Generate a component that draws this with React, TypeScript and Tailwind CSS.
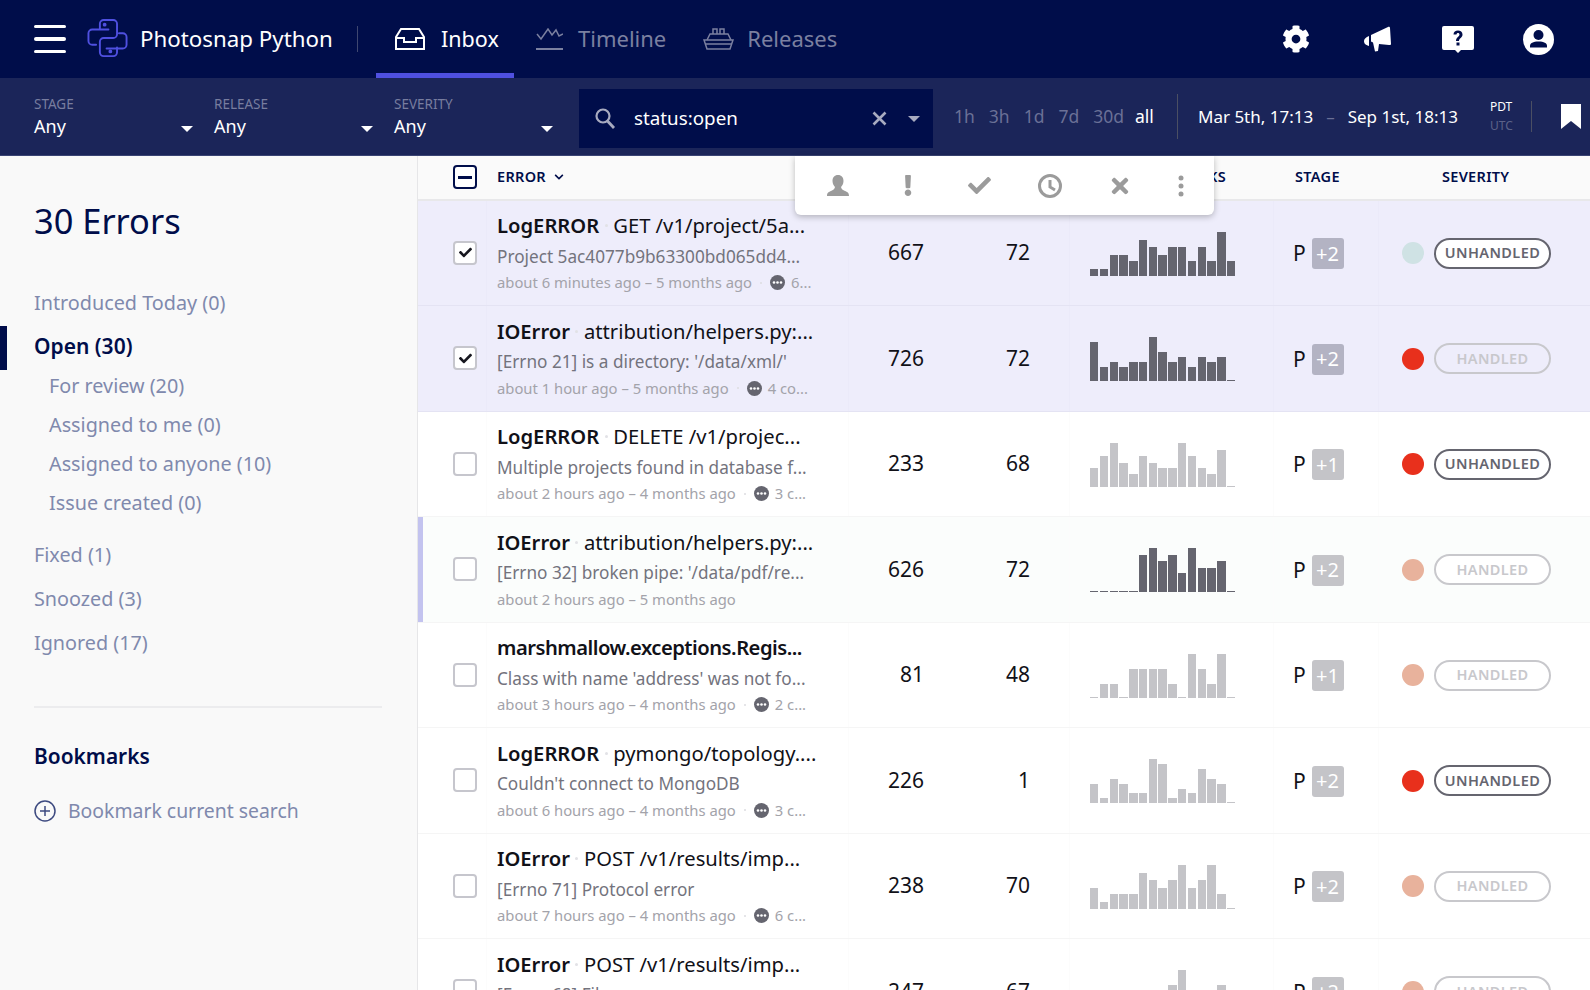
/**
 * Error inbox screen — top nav, filter bar, sidebar with saved searches, issue table.
 */
import { FaCog, FaCheck, FaTimes, FaExclamation, FaChevronDown } from 'react-icons/fa'

type Issue = {
  name: string
  path?: string
  message: string
  time: string
  comments?: string
  events: number
  users: number
  extra: string
  dot: 'pale' | 'red' | 'peach'
  unhandled: boolean
  selected?: boolean
  hover?: boolean
  bars: number[]
}

const ISSUES: Issue[] = [
  {
    name: 'LogERROR', path: 'GET /v1/project/5a...', message: 'Project 5ac4077b9b63300bd065dd4...',
    time: 'about 6 minutes ago – 5 months ago', comments: '6...', events: 667, users: 72, extra: '+2',
    dot: 'pale', unhandled: true, selected: true,
    bars: [7, 7, 21, 21, 15, 36, 29, 21, 29, 29, 15, 29, 15, 44, 15],
  },
  {
    name: 'IOError', path: 'attribution/helpers.py:...', message: "[Errno 21] is a directory: '/data/xml/'",
    time: 'about 1 hour ago – 5 months ago', comments: '4 co...', events: 726, users: 72, extra: '+2',
    dot: 'red', unhandled: false, selected: true,
    bars: [39, 14, 19, 14, 19, 19, 44, 29, 19, 24, 14, 24, 19, 24, 1],
  },
  {
    name: 'LogERROR', path: 'DELETE /v1/projec...', message: 'Multiple projects found in database f...',
    time: 'about 2 hours ago – 4 months ago', comments: '3 c...', events: 233, users: 68, extra: '+1',
    dot: 'red', unhandled: true,
    bars: [19, 31, 44, 24, 13, 31, 24, 19, 19, 44, 31, 19, 13, 37, 1],
  },
  {
    name: 'IOError', path: 'attribution/helpers.py:...', message: "[Errno 32] broken pipe: '/data/pdf/re...",
    time: 'about 2 hours ago – 5 months ago', events: 626, users: 72, extra: '+2',
    dot: 'peach', unhandled: false, hover: true,
    bars: [1, 1, 1, 1, 1, 37, 44, 31, 37, 19, 44, 24, 24, 31, 1],
  },
  {
    name: 'marshmallow.exceptions.Regis...', message: "Class with name 'address' was not fo...",
    time: 'about 3 hours ago – 4 months ago', comments: '2 c...', events: 81, users: 48, extra: '+1',
    dot: 'peach', unhandled: false,
    bars: [1, 14, 14, 1, 29, 29, 29, 29, 14, 1, 44, 29, 14, 44, 1],
  },
  {
    name: 'LogERROR', path: 'pymongo/topology....', message: "Couldn't connect to MongoDB",
    time: 'about 6 hours ago – 4 months ago', comments: '3 c...', events: 226, users: 1, extra: '+2',
    dot: 'red', unhandled: true,
    bars: [19, 5, 24, 19, 10, 10, 44, 39, 5, 14, 10, 34, 24, 19, 1],
  },
  {
    name: 'IOError', path: 'POST /v1/results/imp...', message: '[Errno 71] Protocol error',
    time: 'about 7 hours ago – 4 months ago', comments: '6 c...', events: 238, users: 70, extra: '+2',
    dot: 'peach', unhandled: false,
    bars: [21, 7, 15, 15, 15, 36, 29, 21, 29, 44, 21, 29, 44, 15, 1],
  },
  {
    name: 'IOError', path: 'POST /v1/results/imp...', message: '[Errno 68] File error',
    time: 'about 8 hours ago – 4 months ago', comments: '2 c...', events: 247, users: 67, extra: '+2',
    dot: 'peach', unhandled: false,
    bars: [10, 5, 12, 10, 14, 10, 18, 16, 29, 44, 16, 12, 18, 29, 1],
  },
]

function PythonLogo() {
  return (
    <svg width="41" height="40" viewBox="-1 -1 42 42" fill="none" stroke="#4f50e0" strokeWidth="2" strokeLinecap="round">
      <path d="M12 9V4a4 4 0 0 1 4-4h10a4 4 0 0 1 4 4v11a4 4 0 0 1-4 4H16a4 4 0 0 0-4 4v11a4 4 0 0 0 4 4h10a4 4 0 0 0 4-4v-5" />
      <path d="M21 10H4a4 4 0 0 0-4 4v8a4 4 0 0 0 4 4h4" />
      <path d="M19 30h17a4 4 0 0 0 4-4v-8a4 4 0 0 0-4-4h-4" />
      <circle cx="17" cy="5" r="1" fill="#4f50e0" />
      <circle cx="23" cy="33" r="1" fill="#4f50e0" />
    </svg>
  )
}

function InboxIcon() {
  return (
    <svg width="30" height="22" viewBox="0 0 30 22" fill="none" stroke="#fff" strokeWidth="2">
      <path d="M1 21V9l5-8h18l5 8v12z" />
      <path d="M1 10h8v4h12v-4h8" />
    </svg>
  )
}

function TimelineIcon() {
  return (
    <svg width="27" height="22" viewBox="0 0 27 22" fill="none" stroke="#7b80a0" strokeWidth="2">
      <path d="M1 6l4 5 7-10 4 6 4-5 3 6 4-2" strokeWidth="1.5" />
      <path d="M0 21h27" />
    </svg>
  )
}

function ReleasesIcon() {
  return (
    <svg width="31" height="22" viewBox="0 0 31 22" fill="none" stroke="#7b80a0" strokeWidth="1.5">
      <path d="M1 12h29l-3 9H4z" />
      <path d="M2 16h27" />
      <path d="M4 12l3-6h18l3 6" />
      <path d="M10 6V1h4v5M17 6V1h4v5" />
    </svg>
  )
}

function MegaphoneIcon() {
  return (
    <svg width="28" height="26" viewBox="0 0 28 26" fill="#fff">
      <path d="M7 9L24 1c1-.5 2 0 2 1l1 16c0 1-1 1-2 1l-10-1-1 7-3 .5-2-9-2-1z" />
      <path d="M5 10v10C1 19 0 17 0 15s2-4 5-5z" />
    </svg>
  )
}

function HelpIcon() {
  return (
    <svg width="32" height="27" viewBox="0 0 32 27" fill="#fff">
      <path d="M2 0h28a2 2 0 0 1 2 2v20a2 2 0 0 1-2 2H19l-3 3-3-3H2a2 2 0 0 1-2-2V2a2 2 0 0 1 2-2z" />
      <path d="M11.5 8.5c0-2.500 2-4 4.500-4s4.500 1.500 4.500 4c0 3.500-3.500 3.500-3.500 6.500h-3c0-4 3.500-4 3.500-6.500 0-.9-.6-1.500-1.500-1.500s-1.500.6-1.500 1.500z" fill="#000d4a" />
      <rect x="14.500" y="16.500" width="3" height="3" fill="#000d4a" />
    </svg>
  )
}

function AccountIcon() {
  return (
    <svg width="31" height="31" viewBox="0 0 31 31">
      <circle cx="15.500" cy="15.500" r="15.500" fill="#fff" />
      <circle cx="15.500" cy="11" r="5" fill="#000d4a" />
      <path d="M7 22c0-3 3-4.500 8.500-4.500S24 19 24 22v1.500H7z" fill="#000d4a" />
    </svg>
  )
}

function Caret({ color = 'border-t-white' }: { color?: string }) {
  return <span className={`block w-0 h-0 border-x-[6px] border-x-transparent border-t-[6px] ${color}`} />
}

function CommentDot() {
  return (
    <svg width="15" height="15" viewBox="0 0 15 15" className="shrink-0">
      <circle cx="7.500" cy="7.500" r="7.500" fill="#65656f" />
      <circle cx="4" cy="7.500" r="1.300" fill="#fff" />
      <circle cx="7.500" cy="7.500" r="1.300" fill="#fff" />
      <circle cx="11" cy="7.500" r="1.300" fill="#fff" />
    </svg>
  )
}

function FilterSelect({ label }: { label: string }) {
  return (
    <div className="w-[180px] pr-[21px] flex items-end justify-between">
      <div>
        <div className="text-[13.500px] leading-[16px] text-[#787d9f] mt-[2px]">{label}</div>
        <div className="text-[18px] leading-[28px] text-white">Any</div>
      </div>
      <span className="mb-[8px]"><Caret /></span>
    </div>
  )
}

function SidebarLink({ children, sub, className = '' }: { children: string; sub?: boolean; className?: string }) {
  return (
    <div className={`text-[19.800px] leading-[30px] text-[#8089ad] ${sub ? 'pl-[15px]' : ''} ${className}`}>{children}</div>
  )
}

function Sparkline({ bars, dark }: { bars: number[]; dark: boolean }) {
  return (
    <div className="flex items-end gap-[1.400px] h-[44px]">
      {bars.map((h, i) => (
        <div
          key={i}
          className={`w-[8.400px] ${dark ? 'bg-[#65656f]' : 'bg-[#c4c4c8]'}`}
          style={{ height: h }}
        />
      ))}
    </div>
  )
}

function IssueRow({ issue }: { issue: Issue }) {
  const { selected, hover } = issue
  const rowBg = selected ? 'bg-[#eeedfb] border-[#e4e3f3]' : hover ? 'bg-[#fbfdfc] border-[#f5f5f5]' : 'bg-white border-[#f5f5f5]'
  const cellLine = selected ? 'border-[#ebeaf9]' : 'border-[#fcfcfc]'
  const dotColor = issue.dot === 'red' ? 'bg-[#e8301c]' : issue.dot === 'peach' ? 'bg-[#e8b29c]' : 'bg-[#cfe2e4]'

  return (
    <div className={`relative h-[105.500px] shrink-0 border-b grid grid-cols-[68px_362px_92px_129px_204px_105px_1fr] ${rowBg}`}>
      {hover && <div className="absolute left-0 top-0 bottom-0 w-[5px] bg-[#c3c3ef]" />}

      <div className="flex items-center pl-[35px]">
        <div className="w-[24px] h-[24px] rounded-[4px] border-2 border-[#c6c6cd] bg-white flex items-center justify-center">
          {selected && <FaCheck className="w-[13px] h-[13px] text-[#17171f]" />}
        </div>
      </div>

      <div className={`border-l ${cellLine} pl-[10px] pt-[10px]`}>
        <div className="flex items-center h-[30px] text-[20.200px] text-[#111118] whitespace-nowrap">
          <span className={`font-semibold ${issue.path ? '' : 'tracking-[-0.5px]'}`}>{issue.name}</span>
          {issue.path && (
            <>
              <span className="w-[3px] h-[3px] rounded-full bg-[#e2e2e6] mx-[5.500px]" />
              <span>{issue.path}</span>
            </>
          )}
        </div>
        <div className="h-[28px] leading-[31px] text-[17.200px] text-[#73737d] whitespace-nowrap">{issue.message}</div>
        <div className="flex items-center h-[27px] pt-[1px] text-[14.800px] text-[#a3a3aa] whitespace-nowrap">
          <span>{issue.time}</span>
          {issue.comments && (
            <>
              <span className="w-[2px] h-[2px] rounded-full bg-[#dcdce0] mx-[8px]" />
              <CommentDot />
              <span className="ml-[6px]">{issue.comments}</span>
            </>
          )}
        </div>
      </div>

      <div className={`border-l ${cellLine} flex items-center justify-end pr-[16px] text-[21px] text-[#111118]`}>{issue.events}</div>
      <div className="flex items-center justify-end pr-[39px] text-[21px] text-[#111118]">{issue.users}</div>

      <div className={`border-l ${cellLine} flex items-center pl-[20px] pt-[2px]`}>
        <Sparkline bars={issue.bars} dark={Boolean(selected || hover)} />
      </div>

      <div className={`border-l ${cellLine} flex items-center pl-[19px] pt-[2px]`}>
        <span className="w-[18.500px] text-[21px] text-[#111118]">P</span>
        <span className={`w-[32px] h-[31px] rounded-[3px] flex items-center justify-center text-[20px] text-white ${selected ? 'bg-[#b3b3c3]' : 'bg-[#c4c4c8]'}`}>
          {issue.extra}
        </span>
      </div>

      <div className={`border-l ${cellLine} flex items-center pl-[23px] pt-[1px]`}>
        <span className={`w-[22px] h-[22px] rounded-full ${dotColor}`} />
        <span
          className={`ml-[10px] w-[117px] h-[31px] rounded-full border-2 flex items-center justify-center text-[14.500px] font-semibold tracking-[0.4px] ${
            issue.unhandled ? 'border-[#65656f] text-[#65656f] bg-white' : 'border-[#c8c8cc] text-[#c8c8cc]'
          } ${!issue.unhandled && !selected ? 'bg-white' : ''}`}
        >
          {issue.unhandled ? 'UNHANDLED' : 'HANDLED'}
        </span>
      </div>
    </div>
  )
}

export default function App() {
  return (
    <div className="h-screen w-full overflow-hidden flex flex-col bg-white font-['Noto_Sans',sans-serif]">
      {/* Top nav */}
      <header className="h-[78px] shrink-0 bg-[#000d4a] flex items-center">
        <div className="ml-[34px] w-[32px] flex flex-col gap-[9px]">
          <span className="block h-[3.500px] rounded-full bg-white" />
          <span className="block h-[3.500px] rounded-full bg-white" />
          <span className="block h-[3.500px] rounded-full bg-white" />
        </div>
        <div className="ml-[21px]"><PythonLogo /></div>
        <div className="ml-[12px] w-[217px] text-[22.300px] text-white">Photosnap Python</div>
        <div className="w-px h-[26px] bg-[#3f4770]" />
        <div className="ml-[18px] w-[138px] h-full flex items-center pl-[19px] gap-[16px] border-b-[5px] border-[#4f50e0] text-[21.500px] text-white">
          <span className="mt-[5px]"><InboxIcon /></span>
          <span className="mt-[5px]">Inbox</span>
        </div>
        <div className="ml-[22px] flex items-center gap-[15px] text-[22px] text-[#7b80a0]">
          <TimelineIcon />
          <span className="-mt-[2px]">Timeline</span>
        </div>
        <div className="ml-[37px] flex items-center gap-[13px] text-[22px] text-[#7b80a0]">
          <ReleasesIcon />
          <span className="-mt-[2px]">Releases</span>
        </div>
        <div className="ml-auto mr-[36px] flex items-center">
          <FaCog className="w-[28px] h-[28px] text-white" />
          <span className="ml-[54px]"><MegaphoneIcon /></span>
          <span className="ml-[50px]"><HelpIcon /></span>
          <span className="ml-[49px]"><AccountIcon /></span>
        </div>
      </header>

      {/* Filter bar */}
      <div className="h-[78px] shrink-0 bg-[#1b2559] border-b border-[#3a4474] flex items-center pl-[34px]">
        <div className="flex mt-[1px]">
          <FilterSelect label="STAGE" />
          <FilterSelect label="RELEASE" />
          <FilterSelect label="SEVERITY" />
        </div>
        <div className="ml-[5px] w-[354px] h-[59px] mt-[4px] bg-[#000d4a] flex items-center pl-[16px] pr-[13px]">
          <svg width="21" height="21" viewBox="0 0 21 21" fill="none" stroke="#a8abc0" strokeWidth="2.200">
            <circle cx="8" cy="8" r="6.500" />
            <path d="M12.500 13l6.500 7" strokeWidth="2.800" />
          </svg>
          <span className="ml-[18px] text-[18.800px] text-white">status:open</span>
          <svg className="ml-auto" width="15" height="15" viewBox="0 0 15 15" stroke="#a8abc0" strokeWidth="2.600">
            <path d="M1.500 1.500l12 12M13.500 1.500l-12 12" />
          </svg>
          <span className="ml-[21px]"><Caret color="border-t-[#a8abc0]" /></span>
        </div>
        <div className="ml-[21px] w-[223px] flex gap-[14px] text-[17.500px] text-[#6a7096] whitespace-nowrap">
          <span>1h</span>
          <span>3h</span>
          <span>1d</span>
          <span>7d</span>
          <span>30d</span>
          <span className="-ml-[3px] text-white">all</span>
        </div>
        <div className="w-px h-[45px] bg-[#4b4f63]" />
        <div className="ml-[20px] flex items-center text-[17px] text-white whitespace-nowrap">
          <span>Mar 5th, 17:13</span>
          <span className="mx-[13px] text-[#6a7096]">–</span>
          <span>Sep 1st, 18:13</span>
        </div>
        <div className="ml-[32px] flex flex-col gap-[5px] text-[12px] leading-[14px]">
          <span className="text-white">PDT</span>
          <span className="text-[#5b6288]">UTC</span>
        </div>
        <div className="ml-[18px] w-px h-[31px] bg-[#4b4f63]" />
        <svg className="ml-[29px]" width="20" height="25" viewBox="0 0 20 25" fill="#fff">
          <path d="M0 0h20v25l-10-8-10 8z" />
        </svg>
      </div>

      <div className="flex-1 min-h-0 flex">
        {/* Sidebar */}
        <aside className="w-[418px] shrink-0 bg-[#f9f9f9] border-r border-[#e6e6e8] pl-[34px] pr-[35px] pt-[40px]">
          <div className="text-[34.400px] leading-[50px] text-[#000d4a]">30 Errors</div>
          <SidebarLink className="mt-[42px]">Introduced Today (0)</SidebarLink>
          <div className="relative mt-[13px] text-[21px] leading-[30px] font-semibold text-[#000d4a]">
            <span className="absolute -left-[34px] -top-[5px] w-[7px] h-[44px] bg-[#000d4a]" />
            Open (30)
          </div>
          <SidebarLink sub className="mt-[10px]">For review (20)</SidebarLink>
          <SidebarLink sub className="mt-[9px]">Assigned to me (0)</SidebarLink>
          <SidebarLink sub className="mt-[9px]">Assigned to anyone (10)</SidebarLink>
          <SidebarLink sub className="mt-[9px]">Issue created (0)</SidebarLink>
          <SidebarLink className="mt-[22px]">Fixed (1)</SidebarLink>
          <SidebarLink className="mt-[14px]">Snoozed (3)</SidebarLink>
          <SidebarLink className="mt-[14px]">Ignored (17)</SidebarLink>
          <div className="mt-[48px] h-[2px] bg-[#ececee]" />
          <div className="mt-[33px] text-[20.900px] leading-[30px] font-semibold text-[#000d4a]">Bookmarks</div>
          <div className="mt-[25px] flex items-center gap-[12px] text-[19.400px] leading-[30px] text-[#8089ad]">
            <svg width="22" height="22" viewBox="0 0 22 22" fill="none" stroke="#3d4a80" strokeWidth="1.500">
              <circle cx="11" cy="11" r="10" />
              <path d="M11 6v10M6 11h10" />
            </svg>
            Bookmark current search
          </div>
        </aside>

        {/* Issue table */}
        <main className="relative flex-1 min-w-0 flex flex-col">
          <div className="h-[44.500px] shrink-0 bg-[#fafafa] border-b-2 border-[#e8e8ea] grid grid-cols-[68px_362px_92px_129px_204px_105px_1fr] items-center text-[14.500px] font-semibold text-[#000d4a] tracking-[0.3px]">
            <div className="flex pl-[35px]">
              <div className="w-[24px] h-[24px] rounded-[4px] border-2 border-[#000d4a] bg-white flex items-center justify-center">
                <span className="w-[14px] h-[3px] bg-[#000d4a]" />
              </div>
            </div>
            <div className="pl-[11px] flex items-center gap-[8px]">
              ERROR
              <FaChevronDown className="w-[10px] h-[10px]" />
            </div>
            <div />
            <div />
            <div className="pr-[47px] text-right">TRACKS</div>
            <div className="pl-[22px]">STAGE</div>
            <div className="pl-[64px]">SEVERITY</div>
          </div>

          {ISSUES.map((issue, i) => (
            <IssueRow key={i} issue={issue} />
          ))}

          {/* Bulk actions popover */}
          <div className="absolute left-[377px] top-0 w-[419px] h-[59px] bg-white rounded-b-[6px] shadow-[0_2px_6px_rgba(0,0,0,0.25)] flex items-center pl-[8px] text-[#9b9b9b]">
            <span className="w-[70px] flex justify-center">
              <svg width="22" height="21" viewBox="0 0 22 21" fill="#9b9b9b">
                <path d="M11 0c3.500 0 5.500 2.500 5.500 6 0 3-1.500 5-2.500 6 .2 2 2 3 4 4 2 .8 4 1.500 4 5H0c0-3.500 2-4.200 4-5 2-1 3.800-2 4-4-1-1-2.500-3-2.500-6 0-3.500 2-6 5.500-6z" />
              </svg>
            </span>
            <span className="w-[70px] flex justify-center"><FaExclamation className="w-[20px] h-[21px]" /></span>
            <span className="w-[72px] flex justify-center"><FaCheck className="w-[23px] h-[23px]" /></span>
            <span className="w-[70px] flex justify-center">
              <svg width="24" height="24" viewBox="0 0 24 24" fill="none" stroke="#9b9b9b" strokeWidth="3">
                <circle cx="12" cy="12" r="10.500" />
                <path d="M12 6v7l5 3" />
              </svg>
            </span>
            <span className="w-[70px] flex justify-center"><FaTimes className="w-[24px] h-[24px]" /></span>
            <span className="w-[52px] flex justify-center">
              <svg width="6" height="22" viewBox="0 0 6 22" fill="#9b9b9b">
                <circle cx="3" cy="3" r="2.500" />
                <circle cx="3" cy="11" r="2.500" />
                <circle cx="3" cy="19" r="2.500" />
              </svg>
            </span>
          </div>
        </main>
      </div>
    </div>
  )
}
